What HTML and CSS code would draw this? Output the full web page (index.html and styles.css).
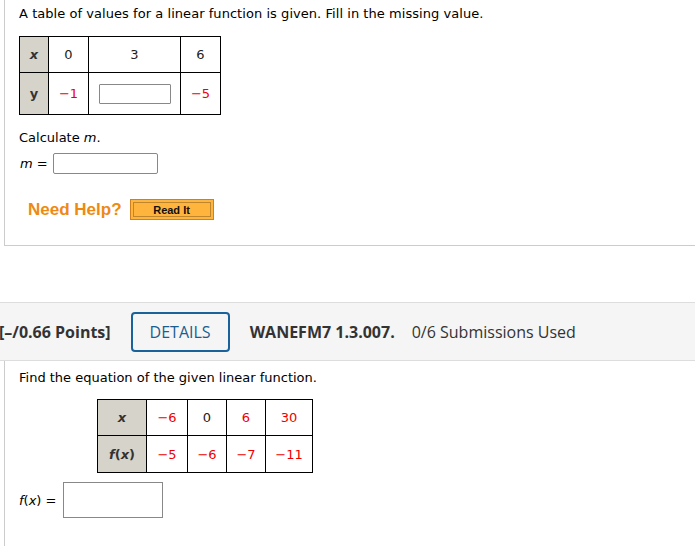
FILE: index.html
```html
<!DOCTYPE html>
<html>
<head>
<meta charset="utf-8">
<link rel="stylesheet" href="styles.css">
</head>
<body>
<div class="panel panel-top">
  <p class="prompt">A table of values for a linear function is given. Fill in the missing value.</p>
  <div class="vtable vtable-1">
    <div class="cell head"><i>x</i></div>
    <div class="cell">0</div>
    <div class="cell">3</div>
    <div class="cell">6</div>
    <div class="cell head">y</div>
    <div class="cell red">&minus;1</div>
    <div class="cell"><span class="answer small"></span></div>
    <div class="cell red">&minus;5</div>
  </div>
  <p class="calc">Calculate <i>m</i>.</p>
  <div class="eq-row">
    <span class="eq-label"><i>m</i> =</span>
    <span class="answer medium"></span>
  </div>
  <div class="help-row">
    <span class="need-help">Need Help?</span>
    <span class="read-it"><span class="read-it-inner">Read It</span></span>
  </div>
</div>

<div class="qheader">
  <span class="points">[&ndash;/0.66 Points]</span>
  <span class="details">DETAILS</span>
  <span class="qid">WANEFM7 1.3.007.</span>
  <span class="subs">0/6 Submissions Used</span>
</div>

<div class="panel panel-bottom">
  <p class="prompt2">Find the equation of the given linear function.</p>
  <div class="vtable vtable-2">
    <div class="cell head"><i>x</i></div>
    <div class="cell red">&minus;6</div>
    <div class="cell">0</div>
    <div class="cell red">6</div>
    <div class="cell red">30</div>
    <div class="cell head"><i>f</i>(<i>x</i>)</div>
    <div class="cell red">&minus;5</div>
    <div class="cell red">&minus;6</div>
    <div class="cell red">&minus;7</div>
    <div class="cell red">&minus;11</div>
  </div>
  <div class="fx-row">
    <span class="eq-label"><i>f</i>(<i>x</i>) =</span>
    <span class="answer large"></span>
  </div>
</div>
</body>
</html>
```

FILE: styles.css
```css
html, body {
  margin: 0;
  padding: 0;
  background: #fff;
}
body {
  font-family: "DejaVu Sans", Verdana, sans-serif;
  font-size: 13px;
  color: #000;
  overflow: hidden;
}
p { margin: 0; }

.panel {
  margin-left: 4px;
  border-left: 1px solid #ccc;
  padding-left: 14px;
}
.panel-top {
  height: 246px;
  box-sizing: border-box;
  border-bottom: 1px solid #ccc;
  padding-top: 6px;
}
.prompt { line-height: 16px; letter-spacing: 0.05px; }

.vtable {
  display: grid;
  background: #000;
  padding: 1px;
  gap: 1px;
  width: max-content;
}
.vtable-1 {
  margin-top: 14px;
  grid-template-columns: 28px 39px 91px 39px;
  grid-template-rows: 35px 41px;
}
.vtable-2 {
  margin-left: 78px;
  margin-top: 13px;
  grid-template-columns: 48px 40px 38px 38px 46px;
  grid-template-rows: 35px 36px;
}
.cell {
  background: #fff;
  display: flex;
  align-items: center;
  justify-content: center;
  color: #222;
}
.cell.head {
  background: #d6d3ca;
  font-weight: bold;
  color: #333;
}
.cell.red { color: #e00; }

.answer {
  display: inline-block;
  box-sizing: border-box;
  border: 1px solid #888;
  background: #fff;
}
.answer.small { width: 72px; height: 20px; border-radius: 1px; }
.answer.medium { width: 105px; height: 21px; border-radius: 2px; }
.answer.large { width: 100px; height: 36px; }

.calc { margin-top: 15px; line-height: 16px; }
.eq-row {
  display: flex;
  align-items: center;
  margin-top: 7px;
  margin-left: 1px;
}
.eq-label { margin-right: 5px; }

.help-row {
  display: flex;
  align-items: center;
  margin-top: 25px;
  margin-left: 9px;
}
.need-help {
  font-family: "Liberation Sans", Arial, sans-serif;
  font-weight: bold;
  font-size: 17px;
  color: #ee8a12;
  margin-right: 8px;
}
.read-it {
  display: inline-block;
  box-sizing: border-box;
  width: 84px;
  height: 21px;
  border: 1px solid #d0801c;
  background: #ffb43e;
  padding: 2px;
}
.read-it-inner {
  display: flex;
  align-items: center;
  justify-content: center;
  box-sizing: border-box;
  height: 100%;
  border: 1px solid #c0862c;
  font-family: "Liberation Sans", Arial, sans-serif;
  font-weight: bold;
  font-size: 11px;
  color: #111;
}

.qheader {
  margin-top: 56px;
  height: 59px;
  box-sizing: border-box;
  background: #f5f5f5;
  border-top: 1px solid #ddd;
  border-bottom: 1px solid #ddd;
  display: flex;
  align-items: center;
  font-family: "Open Sans", sans-serif;
  font-size: 16px;
  color: #333;
}
.points {
  font-weight: bold;
  margin-left: -1px;
  margin-right: 20px;
}
.details {
  box-sizing: border-box;
  width: 99px;
  height: 40px;
  border: 2px solid #1a639a;
  border-radius: 4px;
  color: #1a5d8f;
  display: flex;
  align-items: center;
  justify-content: center;
  margin-right: 20px;
}
.qid { font-weight: bold; margin-right: 17px; }

.panel-bottom {
  height: 200px;
  padding-top: 9px;
}
.prompt2 { line-height: 16px; }
.fx-row {
  display: flex;
  align-items: center;
  margin-top: 9px;
}
.fx-row .eq-label { margin-right: 7px; }
```
